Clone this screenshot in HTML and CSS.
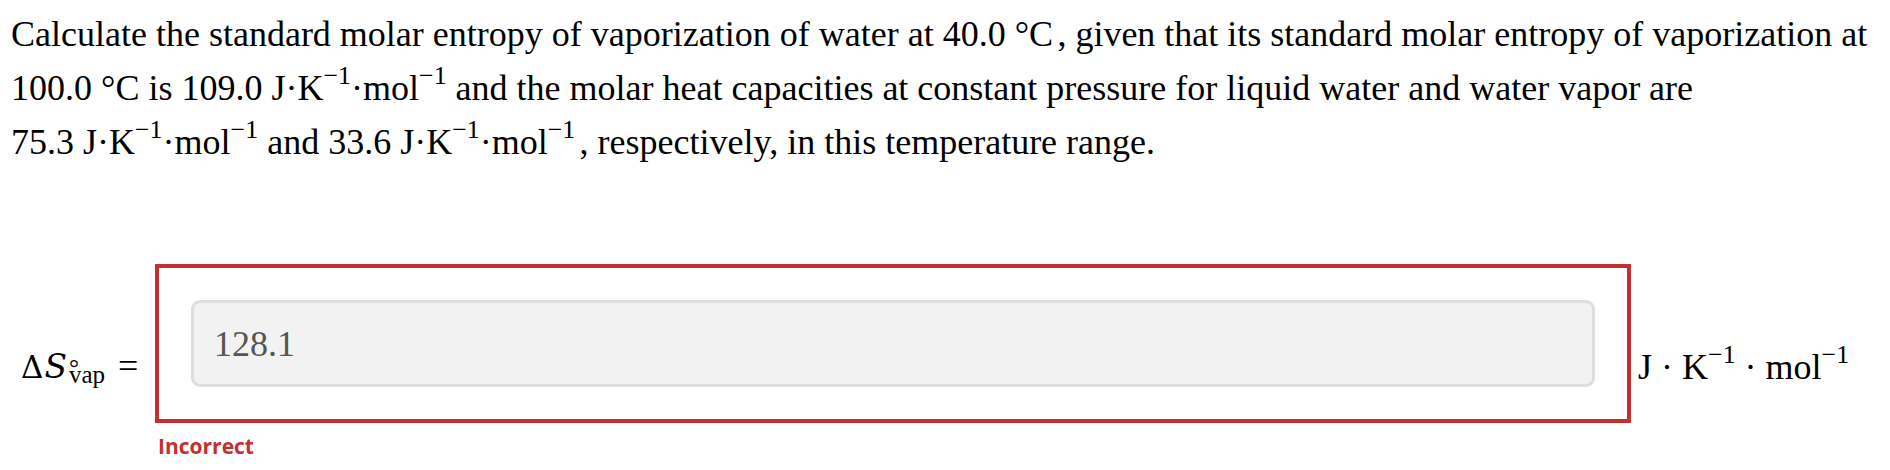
FILE: index.html
```html
<!DOCTYPE html>
<html lang="en">
<head>
<meta charset="utf-8">
<title>Entropy of vaporization</title>
<link rel="stylesheet" href="styles.css">
</head>
<body>
<main class="question">
  <p class="prompt">Calculate the standard molar entropy of vaporization of water at <span class="q gap">40.0 °C</span>, given that its standard molar entropy of vaporization at <span class="q">100.0 °C</span> is <span class="q">109.0 J·K<sup>−1</sup>·mol<sup>−1</sup></span> and the molar heat capacities at constant pressure for liquid water and water vapor are <span class="q">75.3 J·K<sup>−1</sup>·mol<sup>−1</sup></span> and <span class="q gap">33.6 J·K<sup>−1</sup>·mol<sup>−1</sup></span>, respectively, in this temperature range.</p>

  <div class="answer">
    <div class="label"><span class="delta">Δ</span><span class="sym">S</span><span class="deg">°</span><span class="sub">vap</span><span class="eq">=</span></div>
    <div class="field"><input class="entry" type="text" value="128.1" readonly></div>
    <div class="units">J<span class="dot">·</span>K<sup>−1</sup><span class="dot">·</span>mol<sup>−1</sup></div>
    <div class="feedback">Incorrect</div>
  </div>
</main>
</body>
</html>
```

FILE: styles.css
```css
html, body {
  margin: 0;
  padding: 0;
  background: #ffffff;
}

.question {
  padding: 7px 11px 0 11px;
  font-family: "Liberation Serif", "Times New Roman", serif;
  color: #000;
}

.prompt {
  margin: 0;
  font-size: 36px;
  line-height: 54px;
}

.q {
  white-space: nowrap;
}

.q.gap {
  margin-right: 0.12em;
}

sup {
  font-size: 0.72em;
  line-height: 0;
  vertical-align: 0.62em;
}

.answer {
  margin-top: 95px;
  display: grid;
  grid-template-columns: 144px 1476px auto;
  align-items: end;
}

.label {
  font-size: 36px;
  line-height: 40px;
  margin-bottom: 36px;
  padding-left: 10px;
  white-space: nowrap;
}

.delta {
  font-family: "DejaVu Serif", "Liberation Serif", serif;
  font-size: 31px;
  margin-right: 1px;
}

.sym {
  font-family: "DejaVu Serif", "Liberation Serif", serif;
  font-style: italic;
  font-size: 33px;
  margin-right: 2px;
}

.deg {
  font-size: 25px;
  line-height: 0;
  vertical-align: 2px;
  margin-right: -10px;
}

.sub {
  font-size: 25px;
  line-height: 0;
  vertical-align: -5px;
}

.eq {
  margin-left: 13px;
}

.field {
  border: 4px solid #c62f2f;
  padding: 32px;
}

.entry {
  display: block;
  box-sizing: border-box;
  width: 100%;
  height: 87px;
  margin: 0;
  padding: 0 20px;
  border: 3px solid #dedede;
  border-radius: 9px;
  background: #f2f2f2;
  font-family: "Liberation Serif", "Times New Roman", serif;
  font-size: 36px;
  color: #555555;
  outline: none;
}

.units {
  font-size: 36px;
  line-height: 40px;
  margin-bottom: 36px;
  padding-left: 7px;
  white-space: nowrap;
}

.dot {
  margin: 0 9px;
}

.feedback {
  grid-column: 2;
  margin-top: 8px;
  padding-left: 3px;
  font-family: "Open Sans", Lato, sans-serif;
  font-weight: 700;
  font-size: 21px;
  line-height: 30px;
  color: #c62f2f;
}
```
